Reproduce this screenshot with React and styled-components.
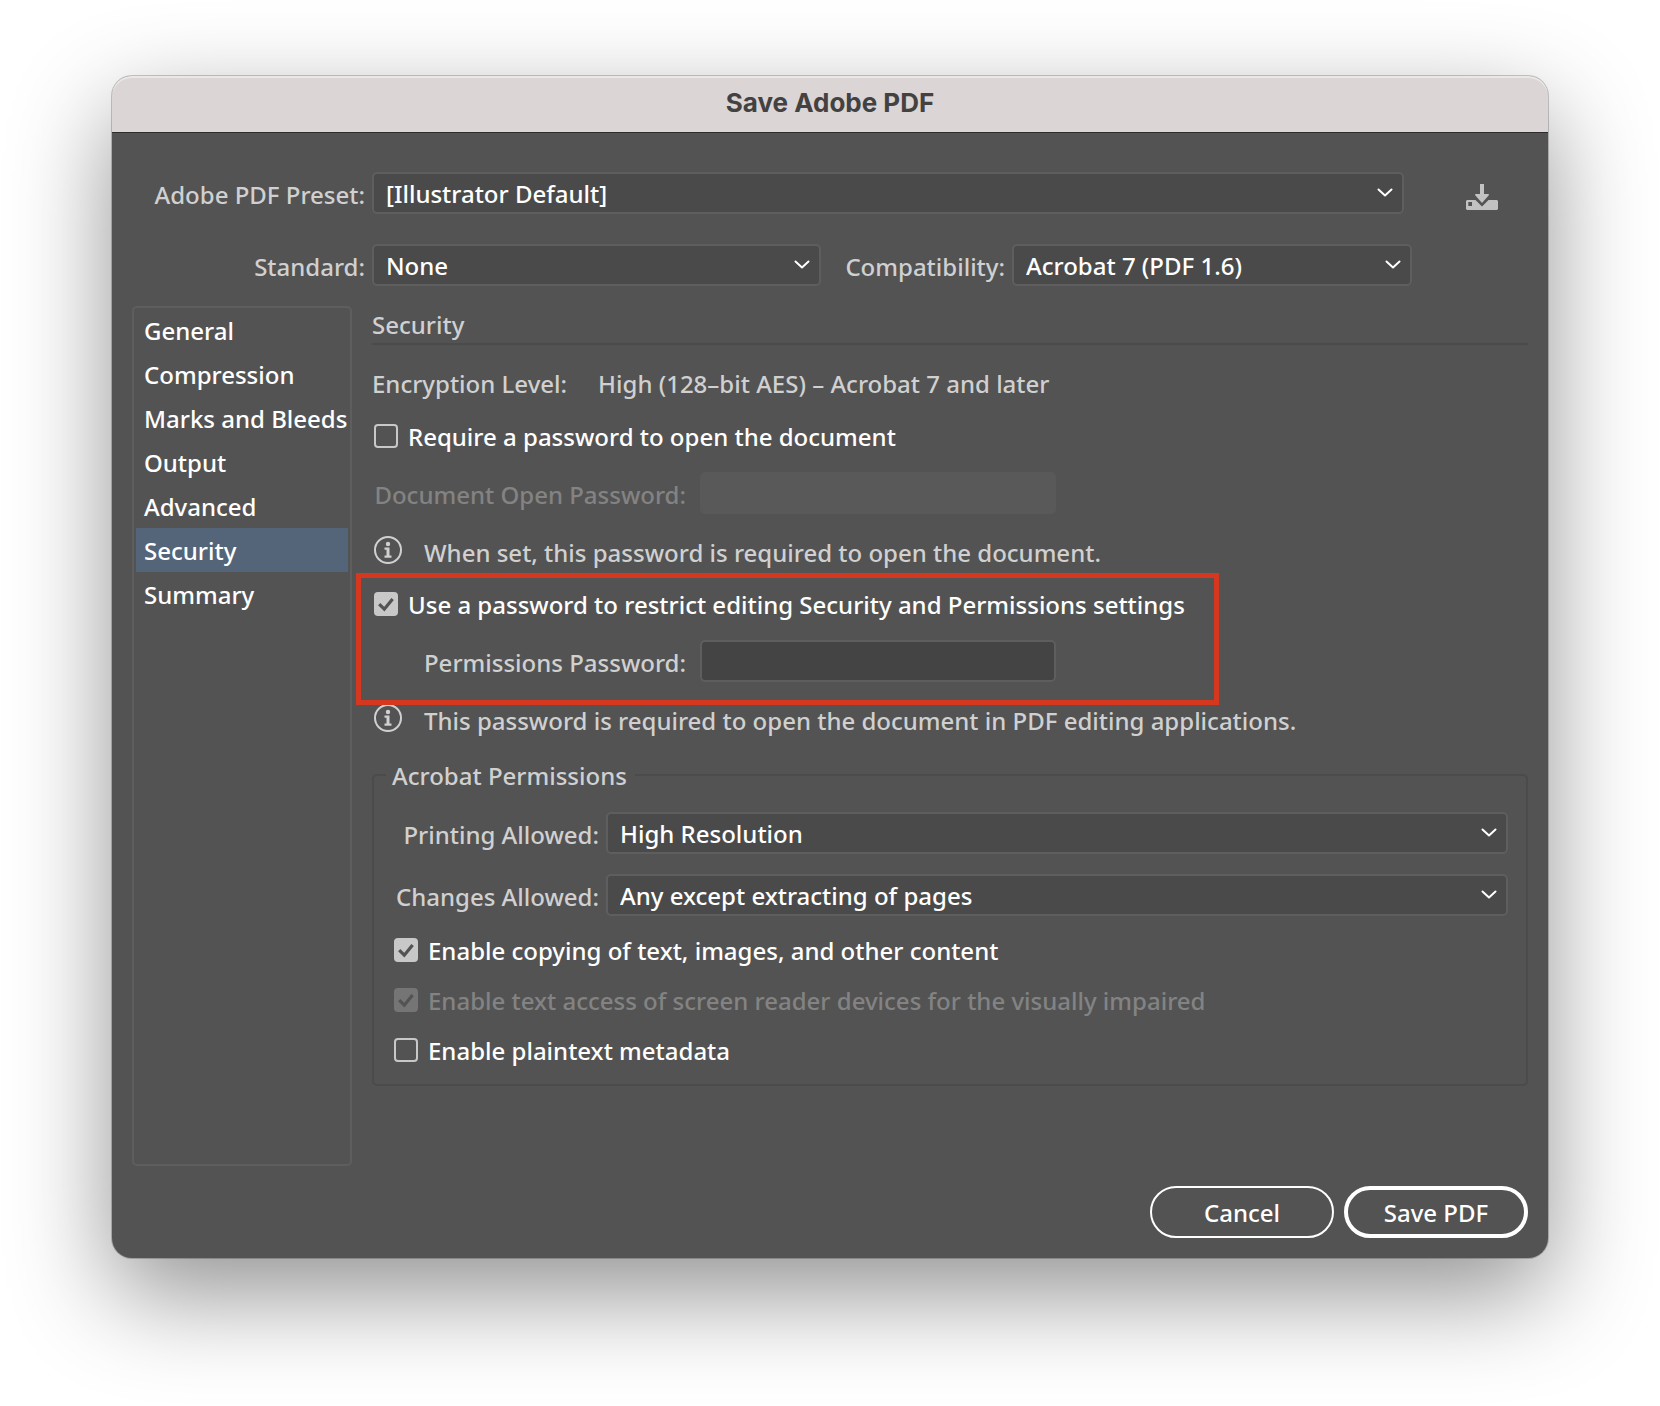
import React, { useState } from 'react';
import styled, { createGlobalStyle, css } from 'styled-components';

const BODY = '#535353';
const FIELD = '#4a4a4a';
const OUTLINE = '#5e5e5e';
const RULE = '#4b4b4b';
const LABEL = '#d0d0d0';
const MUTED = '#838383';
const WHITE = '#ffffff';
const SELECTED = '#54657a';
const RED = '#d6371f';

const svgUrl = (svg) => `url("data:image/svg+xml,${encodeURIComponent(svg)}")`;

const CHEVRON = svgUrl(
  '<svg xmlns="http://www.w3.org/2000/svg" width="16" height="10" viewBox="0 0 16 10"><path d="M1.5 1.5 8 7.5l6.5-6" fill="none" stroke="#fff" stroke-width="2" stroke-linecap="round" stroke-linejoin="round"/></svg>'
);
const CHECK = svgUrl(
  '<svg xmlns="http://www.w3.org/2000/svg" width="24" height="24" viewBox="0 0 24 24"><path d="M5.2 12.2 10.3 17.2 18.6 7" fill="none" stroke="#535353" stroke-width="3.2"/></svg>'
);

const GlobalStyle = createGlobalStyle`
  * {
    box-sizing: border-box;
  }

  body {
    margin: 0;
    background: ${WHITE};
    font-family: 'Noto Sans', 'Open Sans', sans-serif;
    font-weight: 500;
    font-size: 24px;
    line-height: 28px;
    color: ${WHITE};
  }

  input, select, button {
    font: inherit;
    color: inherit;
  }
`;

const Page = styled.div`
  min-height: 100vh;
  padding: 76px 112px 148px;
  display: flex;
`;

const Dialog = styled.section`
  flex: 1;
  display: flex;
  flex-direction: column;
  background: ${BODY};
  border-radius: 20px;
  box-shadow: 0 0 0 1px rgba(0, 0, 0, 0.2), 0 36px 100px rgba(0, 0, 0, 0.43);
`;

const TitleBar = styled.h1`
  height: 57px;
  margin: 0;
  padding-bottom: 2px;
  display: flex;
  align-items: center;
  justify-content: center;
  background: #dbd5d5;
  border-bottom: 1px solid #2b2b2b;
  border-radius: 20px 20px 0 0;
  box-shadow: inset 0 2px 0 #ebe7e7;
  font-family: Inter, sans-serif;
  font-weight: 700;
  font-size: 26px;
  color: #444141;
`;

const Form = styled.form`
  flex: 1;
  padding: 39px 20px 20px;
  display: flex;
  flex-direction: column;
`;

const PresetRow = styled.div`
  display: grid;
  grid-template-columns: 233px 1fr 94px;
  align-items: center;
  padding-right: 30px;
`;

const StandardRow = styled.div`
  display: grid;
  grid-template-columns: 233px 456fr 184px 407fr;
  align-items: center;
  margin: 30px 0 20px;
  padding-right: 116px;
`;

const Label = styled.label`
  padding-top: 3px;
  color: ${({ $muted }) => ($muted ? MUTED : LABEL)};
  text-align: right;
  white-space: nowrap;
`;

const Select = styled.select`
  width: 100%;
  min-width: 0;
  height: 42px;
  padding: 2px 36px 0 12px;
  appearance: none;
  background: ${FIELD} ${CHEVRON} no-repeat right 9px center;
  border: 2px solid ${OUTLINE};
  border-radius: 5px;
  line-height: 36px;
`;

const InlineSelect = styled(Select)`
  margin-left: 7px;
  width: calc(100% - 7px);
`;

const IconButton = styled.button`
  justify-self: end;
  width: 32px;
  height: 26px;
  padding: 0;
  margin-top: 8px;
  border: 0;
  background: none;
  line-height: 0;
`;

const Main = styled.div`
  flex: 1;
  display: flex;
  gap: 20px;
`;

const Sidebar = styled.nav`
  flex: 0 0 220px;
  min-width: 0;
  padding: 0 2px;
  border: 2px solid ${OUTLINE};
  border-radius: 5px;
`;

const Tab = styled.a`
  display: block;
  height: 44px;
  padding-left: 8px;
  line-height: 46px;
  color: ${WHITE};
  text-decoration: none;
  white-space: nowrap;

  ${({ $active }) => $active && css`
    background: ${SELECTED};
  `}
`;

const Panel = styled.div`
  flex: 1;
  min-width: 0;
`;

const Heading = styled.h2`
  margin: 0 0 25px;
  padding: 5px 0 4px;
  border-bottom: 2px solid ${RULE};
  font-size: inherit;
  font-weight: inherit;
  color: ${LABEL};
`;

const Encryption = styled.p`
  margin: 0 0 26px;
  display: flex;
  gap: 31px;
  color: ${LABEL};
`;

const CheckLabel = styled.label`
  display: flex;
  gap: 10px;
  height: 24px;
  padding-left: 2px;
  line-height: 26px;
  color: ${({ $muted }) => ($muted ? MUTED : WHITE)};
  white-space: nowrap;
`;

const CheckBox = styled.input`
  flex: none;
  width: 24px;
  height: 24px;
  margin: 0;
  appearance: none;
  border: 2px solid #c8c8c8;
  border-radius: 4px;

  &:checked {
    border: 0;
    background: #c8c8c8 ${CHECK} no-repeat center;
  }

  &:checked:disabled {
    background-color: #757575;
  }
`;

const PasswordRow = styled.div`
  display: grid;
  grid-template-columns: 314px minmax(0, 356px);
  column-gap: 14px;
  align-items: center;
  margin-top: 24px;
`;

const PasswordInput = styled.input`
  width: 100%;
  height: 42px;
  padding: 0 12px;
  background: #444444;
  border: 2px solid ${OUTLINE};
  border-radius: 5px;

  &:disabled {
    background: #595959;
    border-color: #595959;
  }
`;

const Note = styled.p`
  margin: ${({ $top }) => $top}px 0 0;
  padding-left: 2px;
  height: 28px;
  display: flex;
  gap: 22px;
  color: ${LABEL};
`;

const NoteText = styled.span`
  padding-top: 3px;
`;

/* red frame drawn over the rows it points out */
const Highlight = styled.div`
  position: relative;
  width: 863px;
  max-width: calc(100% + 16px);
  margin: 9px 0 0 -16px;
  padding: 14px 18px 18px 11px;
  border: 5px solid ${RED};
`;

const Group = styled.fieldset`
  margin: 28px 0 0;
  padding: 22px 18px;
  border: 2px solid ${RULE};
  border-radius: 5px;
  min-width: 0;
`;

const Legend = styled.legend`
  margin-left: -6px;
  padding: 2px 8px 0 6px;
  color: ${LABEL};
`;

const GroupRow = styled.div`
  display: grid;
  grid-template-columns: 207px 1fr;
  column-gap: 7px;
  align-items: center;
  margin-bottom: 20px;
`;

const CheckList = styled.div`
  display: flex;
  flex-direction: column;
  gap: 26px;
  padding-top: 2px;
`;

const Footer = styled.footer`
  display: flex;
  justify-content: flex-end;
  gap: 10px;
  margin-top: 20px;
`;

const PillButton = styled.button`
  width: 184px;
  height: 52px;
  padding: 2px 0 0;
  background: none;
  border: ${({ $primary }) => ($primary ? 4 : 2)}px solid ${WHITE};
  border-radius: 26px;
`;

const InfoIcon = () => (
  <svg width="28" height="28" viewBox="0 0 28 28" fill="none" aria-hidden="true">
    <circle cx="14" cy="14" r="13" stroke={LABEL} strokeWidth="2" />
    <circle cx="14" cy="8" r="2.2" fill={LABEL} />
    <path d="M10.5 11.5h5v8h2v2.2h-7v-2.2h2v-5.8h-2z" fill={LABEL} />
  </svg>
);

const SaveIcon = () => (
  <svg width="32" height="26" viewBox="0 0 32 26" fill="#c2c2c2" aria-hidden="true">
    <path d="M1 16h8.5l6.5 6.5 6.5-6.5H31l1 1v8l-1 1H1l-1-1v-8z" />
    <path d="M2.3 18h3.7v4H2.3z" fill={BODY} />
    <path d="M14 0h4v10h4.8v1.2L16 19l-6.8-7.8V10H14z" />
  </svg>
);

const TABS = ['General', 'Compression', 'Marks and Bleeds', 'Output', 'Advanced', 'Security', 'Summary'];

const Check = ({ children, disabled, ...rest }) => (
  <CheckLabel $muted={disabled}>
    <CheckBox type="checkbox" disabled={disabled} {...rest} />
    {children}
  </CheckLabel>
);

const App = () => {
  const [tab, setTab] = useState('Security');

  return (
    <>
      <GlobalStyle />
      <Page>
        <Dialog>
          <TitleBar>Save Adobe PDF</TitleBar>
          <Form onSubmit={(e) => e.preventDefault()}>
            <PresetRow>
              <Label htmlFor="preset">Adobe PDF Preset:</Label>
              <InlineSelect id="preset">
                <option>[Illustrator Default]</option>
              </InlineSelect>
              <IconButton type="button" aria-label="Save preset">
                <SaveIcon />
              </IconButton>
            </PresetRow>
            <StandardRow>
              <Label htmlFor="standard">Standard:</Label>
              <InlineSelect id="standard">
                <option>None</option>
              </InlineSelect>
              <Label htmlFor="compatibility">Compatibility:</Label>
              <InlineSelect id="compatibility">
                <option>Acrobat 7 (PDF 1.6)</option>
              </InlineSelect>
            </StandardRow>

            <Main>
              <Sidebar>
                {TABS.map((name) => (
                  <Tab key={name} href={`#${name}`} $active={name === tab} onClick={() => setTab(name)}>
                    {name}
                  </Tab>
                ))}
              </Sidebar>

              <Panel>
                <Heading>Security</Heading>
                <Encryption>
                  <span>Encryption Level:</span>
                  <span>High (128–bit AES) – Acrobat 7 and later</span>
                </Encryption>

                <Check>Require a password to open the document</Check>
                <PasswordRow>
                  <Label htmlFor="open-password" $muted>Document Open Password:</Label>
                  <PasswordInput id="open-password" type="password" disabled />
                </PasswordRow>
                <Note $top={22}>
                  <InfoIcon />
                  <NoteText>When set, this password is required to open the document.</NoteText>
                </Note>

                <Highlight>
                  <Check defaultChecked>Use a password to restrict editing Security and Permissions settings</Check>
                  <PasswordRow>
                    <Label htmlFor="permissions-password">Permissions Password:</Label>
                    <PasswordInput id="permissions-password" type="password" />
                  </PasswordRow>
                </Highlight>
                <Note $top={-1}>
                  <InfoIcon />
                  <NoteText>This password is required to open the document in PDF editing applications.</NoteText>
                </Note>

                <Group>
                  <Legend>Acrobat Permissions</Legend>
                  <GroupRow>
                    <Label htmlFor="printing">Printing Allowed:</Label>
                    <Select id="printing">
                      <option>High Resolution</option>
                    </Select>
                  </GroupRow>
                  <GroupRow>
                    <Label htmlFor="changes">Changes Allowed:</Label>
                    <Select id="changes">
                      <option>Any except extracting of pages</option>
                    </Select>
                  </GroupRow>
                  <CheckList>
                    <Check defaultChecked>Enable copying of text, images, and other content</Check>
                    <Check defaultChecked disabled>
                      Enable text access of screen reader devices for the visually impaired
                    </Check>
                    <Check>Enable plaintext metadata</Check>
                  </CheckList>
                </Group>
              </Panel>
            </Main>

            <Footer>
              <PillButton type="button">Cancel</PillButton>
              <PillButton type="submit" $primary>Save PDF</PillButton>
            </Footer>
          </Form>
        </Dialog>
      </Page>
    </>
  );
};

export default App;
